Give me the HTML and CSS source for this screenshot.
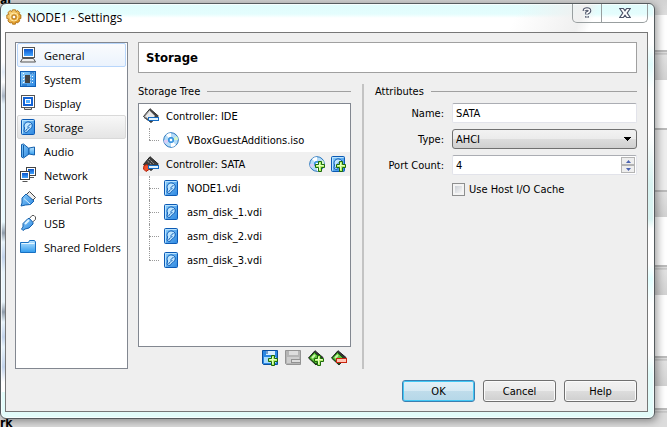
FILE: index.html
```html
<!DOCTYPE html>
<html lang="en">
<head>
  <meta charset="UTF-8">
  <meta name="viewport" content="width=device-width, initial-scale=1.0">
  <title>NODE1 - Settings</title>
  <link rel="stylesheet" href="styles.css">
</head>
<body>
  <!-- shared icons -->
  <svg class="sprite" aria-hidden="true">
    <defs>
      <linearGradient id="blue" x1="0" y1="0" x2="1" y2="1">
        <stop offset="0" stop-color="#8fd0fb"/>
        <stop offset="1" stop-color="#2b86e0"/>
      </linearGradient>
      <linearGradient id="screen" x1="0" y1="0" x2="0" y2="1">
        <stop offset="0" stop-color="#0a55cc"/>
        <stop offset="1" stop-color="#42a5ff"/>
      </linearGradient>
      <linearGradient id="folder" x1="0" y1="0" x2="0" y2="1">
        <stop offset="0" stop-color="#bfe6ff"/>
        <stop offset="1" stop-color="#2f9bee"/>
      </linearGradient>
      <linearGradient id="gold" x1="0" y1="0" x2="1" y2="1">
        <stop offset="0" stop-color="#ffe08a"/>
        <stop offset="1" stop-color="#d98a10"/>
      </linearGradient>
    </defs>
    <symbol id="disk" viewBox="0 0 16 16">
      <rect x="1.5" y=".5" width="13" height="15" rx="1" fill="url(#blue)" stroke="#0c5ab4"/>
      <path d="M2.5 14.5v-13h11" fill="none" stroke="#b9e3ff"/>
      <path d="M4.5 9C3 5 6 2.500 9 3c4 .8 4 5 1.500 7-1.500 1-2 1-2.500 2.500-1 1.500-3.500 1-4-.5z" fill="#bfe6ff" stroke="#0c5ab4"/>
      <path d="M10.500 5L8 7.500c-.5 1 .2 1.800 1.500 1.200M5.500 12l2-2.500" fill="none" stroke="#0c5ab4"/>
    </symbol>
    <symbol id="disc" viewBox="0 0 16 16">
      <circle cx="8" cy="8" r="7.3" fill="#b5dcf8" stroke="#2a76bd"/>
      <path d="M8 8L3 3a7 7 0 0 1 5-2z" fill="#fff"/>
      <path d="M8 8l5 5a7 7 0 0 1-5 2z" fill="#fff"/>
      <path d="M8 8l6-4a7 7 0 0 1 1 4z" fill="#d6f7c8"/>
      <path d="M8 8l-6 4a7 7 0 0 1-1-4z" fill="#d9cdf6"/>
      <circle cx="8" cy="8" r="2.700" fill="#4ba4ea" stroke="#3c92dc"/>
      <circle cx="8" cy="8" r="1.2" fill="#fff"/>
    </symbol>
    <symbol id="plus" viewBox="0 0 16 16">
      <path d="M9.500 5.500h3v3h3v3h-3v4h-3v-4h-3v-3h3z" fill="#b4f06e" stroke="#1d6b0a"/>
      <path d="M10.500 14V7M7.500 9.500h7" stroke="#e4ffc0" fill="none"/>
    </symbol>
    <symbol id="chip" viewBox="0 0 16 16">
      <path d="M7 .7l8 6.800-7 7.500L.5 8z" fill="#333" stroke="#222"/>
      <path d="M6.500 2.500l6 6L8 14 1.200 8z" fill="#62c43c" stroke="#185f0b"/>
      <path d="M4 8l3-3" stroke="#ccf5ad" stroke-width="2"/>
    </symbol>
    <symbol id="ide" viewBox="0 0 16 16">
      <path d="M7 .7l8.300 7.300L8 14.500.5 8.500z" fill="#444" stroke="#333"/>
      <path d="M6.500 2.500l5.500 5.500-4.500 4.500-6-4z" fill="#e7e7e7" stroke="#999"/>
      <path d="M1 9.500l6 4" stroke="#555"/>
      <rect x="5.500" y="9.500" width="10" height="3" fill="#dff3ff" stroke="#1469c0"/>
    </symbol>
    <symbol id="sata" viewBox="0 0 16 16">
      <path d="M7 .7l8.300 7.300L8 14.500.5 8.500z" fill="#3d3d3d" stroke="#222"/>
      <path d="M6 3l5 5M4.500 5l4.500 4" stroke="#a5a5a5" stroke-dasharray="2 1"/>
      <path d="M1 9.500l3-1 2 2v3l-3 2-2.500-2.500z" fill="#f2522b" stroke="#ae210b"/>
      <rect x="5.500" y="9.500" width="10" height="3" fill="#dff3ff" stroke="#1469c0"/>
    </symbol>
  </svg>

  <span class="behind behind-top">al</span>
  <span class="behind behind-bottom">rk</span>

  <div class="window">
    <header class="titlebar">
      <svg class="icon" viewBox="0 0 16 16">
        <path d="M6.500.8h3l.5 1.700 1.700-.9 2 2-.8 1.600 2 .7v3.600l-2 .7.800 1.700-2 2-1.700-.8-.6 2.100H6.500l-.7-2-1.700.8-2.200-2 .9-1.800-2-.7V6l2-.6-.9-1.800 2.200-2 1.700.9z" fill="url(#gold)" stroke="#a66305" stroke-width=".8"/>
        <circle cx="8" cy="8" r="4" fill="none" stroke="#ffe8a6"/>
        <circle cx="8" cy="8" r="2" fill="#fff" stroke="#b06c09"/>
      </svg>
      <h1 class="title">NODE1 - Settings</h1>
      <div class="caption-buttons">
        <button type="button" class="caption-button" aria-label="Help">
          <svg class="glyph" viewBox="0 0 12 12">
            <path d="M3.500 4V3.200Q3.700 2 6 2t2.500 1.700Q8.500 5 6 6v1.500M6 9v1.800" fill="none" stroke="#4c5368" stroke-width="3.600"/>
            <path d="M3.500 3.700V3.200Q3.700 2 6 2t2.500 1.700Q8.500 5 6 6v1.200M6 9.300v1.200" fill="none" stroke="#fff" stroke-width="1.500"/>
          </svg>
        </button>
        <button type="button" class="caption-button caption-close" aria-label="Close">
          <svg class="glyph" viewBox="0 0 12 12">
            <path d="M.7 1.500h3.600L6 3.700l1.700-2.200h3.600L8.200 6l3.100 4.500H7.700L6 8.300l-1.700 2.200H.7L3.800 6z" fill="#fff" stroke="#4c5368" stroke-width="1.200"/>
          </svg>
        </button>
      </div>
    </header>

    <form class="client">
      <div class="main">
        <nav class="sidebar">
          <a href="#general" class="nav-item hover">
            <svg class="icon" viewBox="0 0 16 16">
              <rect x="2.500" y=".5" width="12" height="10" fill="#fff" stroke="#555"/>
              <rect x="4" y="2" width="9" height="7" fill="url(#screen)"/>
              <path d="M2.500 11.500h11l2 3.500H.5z" fill="#eee" stroke="#555"/>
            </svg>
            General
          </a>
          <a href="#system" class="nav-item">
            <svg class="icon" viewBox="0 0 16 16">
              <rect x=".5" y=".5" width="15" height="15" fill="url(#blue)" stroke="#1060b8"/>
              <path d="M3.500 2v12M12.500 2v12" stroke="#fff" stroke-dasharray="1 2"/>
              <rect x="5" y="4" width="5" height="8" fill="#444"/>
              <path d="M4 5h7M4 8h7M4 11h7" stroke="#dceeff" stroke-dasharray="1 5"/>
              <path d="M2 14h5M10 2h4" stroke="#0d5bb3"/>
            </svg>
            System
          </a>
          <a href="#display" class="nav-item">
            <svg class="icon" viewBox="0 0 16 16">
              <rect x="1.500" y=".5" width="13" height="12" fill="#fff" stroke="#555"/>
              <rect x="3" y="2" width="10" height="9" fill="#1263d6"/>
              <rect x="5.500" y="4.500" width="5" height="4" fill="#55b0ff" stroke="#fff"/>
              <path d="M4.500 13v1.500h7V13" fill="#ddd" stroke="#555"/>
            </svg>
            Display
          </a>
          <a href="#storage" class="nav-item current">
            <svg class="icon"><use href="#disk"/></svg>
            Storage
          </a>
          <a href="#audio" class="nav-item">
            <svg class="icon" viewBox="0 0 16 16">
              <path d="M1.500 1.500l2-.5L9 5.500V11l-5.500 4-2-1z" fill="url(#blue)" stroke="#1460ad"/>
              <path d="M3.500 2v12" stroke="#1460ad"/>
              <path d="M9 5l5.500-1v8L9 11z" fill="url(#folder)" stroke="#1460ad"/>
            </svg>
            Audio
          </a>
          <a href="#network" class="nav-item">
            <svg class="icon" viewBox="0 0 16 16">
              <rect x="6.500" y=".5" width="9" height="8" fill="#fff" stroke="#444"/>
              <rect x="8" y="2" width="6" height="5" fill="url(#screen)"/>
              <path d="M10 10.500h4" stroke="#555"/>
              <rect x=".5" y="4.500" width="9" height="8" fill="#fff" stroke="#444"/>
              <rect x="2" y="6" width="6" height="5" fill="url(#screen)"/>
              <path d="M2.500 14.500h5" stroke="#555"/>
            </svg>
            Network
          </a>
          <a href="#serial" class="nav-item">
            <svg class="icon" viewBox="0 0 16 16">
              <path d="M6 4l3.500-3.500 6 6L12 10z" fill="#eee" stroke="#444"/>
              <path d="M2 7l4-4 8 7-3.500 3.500-5 .5L1 15l1-3z" fill="url(#blue)" stroke="#1460ad"/>
              <path d="M4 7.500l6 5.500" stroke="#d6efff"/>
            </svg>
            Serial Ports
          </a>
          <a href="#usb" class="nav-item">
            <svg class="icon" viewBox="0 0 16 16">
              <path d="M9 4l3-3.500h2L15.500 2v2.500L12 7.500z" fill="#fff" stroke="#555"/>
              <path d="M3 8.500l5-5h1.500l3.500 4V9l-4 4-4 1-2 1.500L1.500 14 3 12z" fill="url(#blue)" stroke="#1460ad"/>
              <path d="M5 9l4-4" stroke="#e2f5ff" stroke-width="2"/>
            </svg>
            USB
          </a>
          <a href="#shared" class="nav-item">
            <svg class="icon" viewBox="0 0 16 16">
              <path d="M.5 13.500v-10h8l1-2h5l1 1.500v10.500z" fill="url(#folder)" stroke="#1770c2"/>
              <path d="M1.500 4.500h13" stroke="#e6f7ff"/>
            </svg>
            Shared Folders
          </a>
        </nav>

        <div class="page">
          <h2 class="page-title">Storage</h2>
          <div class="panels">
            <section class="panel">
              <h3 class="group-title">Storage Tree</h3>
              <ul class="tree">
                <li class="tree-row">
                  <svg class="icon"><use href="#ide"/></svg>
                  <span>Controller: IDE</span>
                </li>
                <li class="tree-row child last">
                  <svg class="icon"><use href="#disc"/></svg>
                  <span>VBoxGuestAdditions.iso</span>
                </li>
                <li class="tree-row selected">
                  <svg class="icon"><use href="#sata"/></svg>
                  <span class="grow">Controller: SATA</span>
                  <button type="button" class="tool" aria-label="Add CD/DVD Device">
                    <svg class="icon"><use href="#disc"/><use href="#plus"/></svg>
                  </button>
                  <button type="button" class="tool" aria-label="Add Hard Disk">
                    <svg class="icon"><use href="#disk"/><use href="#plus"/></svg>
                  </button>
                </li>
                <li class="tree-row child">
                  <svg class="icon"><use href="#disk"/></svg>
                  <span>NODE1.vdi</span>
                </li>
                <li class="tree-row child">
                  <svg class="icon"><use href="#disk"/></svg>
                  <span>asm_disk_1.vdi</span>
                </li>
                <li class="tree-row child">
                  <svg class="icon"><use href="#disk"/></svg>
                  <span>asm_disk_2.vdi</span>
                </li>
                <li class="tree-row child last">
                  <svg class="icon"><use href="#disk"/></svg>
                  <span>asm_disk_3.vdi</span>
                </li>
              </ul>
              <div class="toolbar">
                <button type="button" class="tool" aria-label="Add Attachment">
                  <svg class="icon" viewBox="0 0 16 16">
                    <path d="M.5.5h15v14h-14l-1-1z" fill="#2c88e2" stroke="#0b4f9f"/>
                    <path d="M4 1h9v4H4z" fill="#d9efff"/>
                    <path d="M2 7h12v6H2z" fill="#a9dcff"/>
                    <path d="M5 1v3" stroke="#0b4f9f"/>
                    <use href="#plus"/>
                  </svg>
                </button>
                <button type="button" class="tool" aria-label="Remove Attachment" disabled>
                  <svg class="icon" viewBox="0 0 16 16">
                    <path d="M.5.5h15v14h-14l-1-1z" fill="#b5b5b5" stroke="#949494"/>
                    <path d="M4 1h9v4H4z" fill="#ddd"/>
                    <path d="M2 7h12v6H2z" fill="#cecece"/>
                    <rect x="6.500" y="9.500" width="9" height="3" fill="#ddd" stroke="#929292"/>
                  </svg>
                </button>
                <button type="button" class="tool" aria-label="Add Controller">
                  <svg class="icon"><use href="#chip"/><use href="#plus"/></svg>
                </button>
                <button type="button" class="tool" aria-label="Remove Controller">
                  <svg class="icon" viewBox="0 0 16 16">
                    <use href="#chip"/>
                    <rect x="5.500" y="8.500" width="10" height="4" fill="#ffc4b4" stroke="#c9230e"/>
                  </svg>
                </button>
              </div>
            </section>

            <div class="divider"></div>

            <section class="panel">
              <h3 class="group-title">Attributes</h3>
              <div class="fields">
                <label for="name">Name:</label>
                <input type="text" id="name" class="field" value="SATA">

                <label for="type">Type:</label>
                <select id="type" class="field combo">
                  <option>AHCI</option>
                </select>

                <label for="ports">Port Count:</label>
                <div class="spin field">
                  <input type="text" id="ports" class="spin-input" inputmode="numeric" value="4">
                  <div class="spin-buttons">
                    <button type="button" class="spin-button" aria-label="Increase">
                      <svg class="arrow" viewBox="0 0 5 3"><path d="M0 3l2.500-3L5 3z"/></svg>
                    </button>
                    <button type="button" class="spin-button" aria-label="Decrease">
                      <svg class="arrow" viewBox="0 0 5 3"><path d="M0 0l2.500 3L5 0z"/></svg>
                    </button>
                  </div>
                </div>

                <div class="check">
                  <input type="checkbox" id="cache" class="checkbox">
                  <label for="cache">Use Host I/O Cache</label>
                </div>
              </div>
            </section>
          </div>
        </div>
      </div>

      <footer class="actions">
        <button type="button" class="button default">OK</button>
        <button type="button" class="button">Cancel</button>
        <button type="button" class="button">Help</button>
      </footer>
    </form>
  </div>
</body>
</html>
```

FILE: styles.css
```css
* {
  box-sizing: border-box;
}

body {
  display: flex;
  height: 100vh;
  margin: 0;
  padding: 3px 12px 8px 0;
  overflow: hidden;
  font-family: "DejaVu Sans Condensed", "DejaVu Sans", sans-serif;
  font-size: 11px;
  color: #000;
  background: linear-gradient(
    #d2d2d2 0, #dedede 15px, #fff 15px, #fff 50px,
    #bbb 50px, #bbb 52px, #e8e8e8 52px, #bbb 54px, #e2e2e2 55px, #d2d2d2 80px, #fff 80px, #fff 128px,
    #bbb 128px, #bbb 130px, #eee 130px, #eee 190px,
    #bbb 190px, #bbb 192px, #e2e2e2 192px, #d2d2d2 217px, #fff 217px, #fff 265px,
    #bbb 265px, #bbb 267px, #e8e8e8 267px, #bbb 269px, #e2e2e2 270px, #d2d2d2 295px, #fff 295px, #fff 356px,
    #bbb 356px, #bbb 358px, #e8e8e8 358px, #bbb 360px, #e2e2e2 361px, #d2d2d2 386px, #fff 386px, #fff 408px,
    #bbb 408px, #bbb 410px, #e8e8e8 410px, #bbb 412px, #dcdcdc 413px);
}

h1, h2, h3, ul {
  margin: 0;
  padding: 0;
  font-size: 11px;
  font-weight: normal;
}

button, input, select {
  margin: 0;
  padding: 0;
  font: inherit;
  color: inherit;
}

.sprite {
  position: absolute;
  width: 0;
  height: 0;
}

.icon {
  display: block;
  flex: none;
  width: 16px;
  height: 16px;
}

/* text of the window underneath */
.behind {
  position: absolute;
  left: 0;
  font-weight: bold;
  font-size: 12px;
  line-height: 12px;
}

.behind-top {
  top: -6px;
}

.behind-bottom {
  bottom: -2px;
}

.window {
  position: relative;
  display: flex;
  flex: 1;
  flex-direction: column;
  min-width: 0;
  padding: 0 6px 6px 4px;
  border: 1px solid #555b5e;
  border-radius: 6px;
  background:
    linear-gradient(#fff 0, #fff 30px, #e3edf8 40px, #fff 50px, #a9b5c4 64px, #e8f4fb 72px, #eafaff 190px, #8f9cab 201px, #e8f4fb 210px, #c3d4ec 225px, #e8f4fb 240px, #e8f4fb 270px, #8f9cab 280px, #e8f4fb 290px, #c3d4ec 305px, #e8f4fb 315px, #c3d4ec 335px, #fff 350px) 0 28px / 4px 360px no-repeat,
    linear-gradient(115deg, rgba(240, 240, 240, 0) 48%, #f0f0f0 58%, rgba(240, 240, 240, 0) 60%) 200px 0 / 100% 28px no-repeat,
    linear-gradient(#e0fcfc, #e4fdfd 10px, #fff 14px, #fff 40px, #e0fbfb 60px, #fff 85px, #fff 130px, #d9f3f1 180px, #d9f3f1 215px, #fff 225px, #fff 260px, #e2ffff 275px, #fff 300px, #fff 350px, #e2fcfa 370px);
  box-shadow: inset 0 0 0 1px rgba(255, 255, 255, 0.7), 2px 2px 8px rgba(0, 0, 0, 0.4);
}

.titlebar {
  display: flex;
  align-items: flex-start;
  gap: 5px;
  height: 28px;
}

.titlebar > .icon {
  margin: 5px 0 0 1px;
}

.title {
  flex: 1;
  font-family: "Open Sans", "Noto Sans", sans-serif;
  font-size: 12px;
  line-height: 28px;
}

.caption-buttons {
  display: flex;
  height: 19px;
  border: 1px solid #999fa0;
  border-top: 0;
  border-radius: 0 0 5px 5px;
}

.caption-button {
  display: flex;
  align-items: center;
  justify-content: center;
  width: 28px;
  border: 0;
  background: none;
}

.caption-close {
  width: 46px;
  border-left: 1px solid #999fa0;
}

.glyph {
  width: 12px;
  height: 12px;
}

.client {
  display: flex;
  flex: 1;
  flex-direction: column;
  gap: 11px;
  min-height: 0;
  padding: 9px 10px 9px 9px;
  border: 1px solid #777;
  background: #efefef;
}

.main {
  display: flex;
  flex: 1;
  gap: 10px;
  min-height: 0;
}

.sidebar {
  width: 113px;
  padding: 0 1px;
  border: 1px solid #828790;
  background: #fff;
  font-family: "Open Sans", "Noto Sans", sans-serif;
}

.nav-item {
  display: flex;
  align-items: center;
  gap: 8px;
  height: 24px;
  padding: 0 2px;
  border: 1px solid transparent;
  border-radius: 2px;
  color: #000;
  text-decoration: none;
  white-space: nowrap;
}

.nav-item.hover {
  border-color: #b8d6fb;
  background: linear-gradient(#fafbfd, #ebf3fd);
}

.nav-item.current {
  border-color: #d9d9d9;
  background: linear-gradient(#f8f8f8, #e5e5e5);
}

.page {
  display: flex;
  flex: 1;
  flex-direction: column;
  gap: 11px;
  min-width: 0;
}

.page-title {
  padding: 0 7px;
  border: 1px solid #a0a0a0;
  background: #fff;
  font-family: "DejaVu Sans Condensed", "DejaVu Sans", sans-serif;
  font-size: 13px;
  font-weight: bold;
  line-height: 29px;
}

.panels {
  display: grid;
  flex: 1;
  grid-template-columns: 213fr 2px 262fr;
  column-gap: 11px;
}

.panel {
  display: flex;
  flex-direction: column;
  min-width: 0;
}

.divider {
  background: #c3c3c3;
}

.group-title {
  display: flex;
  align-items: center;
  gap: 7px;
  height: 19px;
  padding-bottom: 4px;
}

.group-title::after {
  content: "";
  flex: 1;
  height: 1px;
  background: #a0a0a0;
}

.tree {
  flex: 1;
  border: 1px solid #828790;
  background: #fff;
  list-style: none;
}

.tree-row {
  display: flex;
  align-items: center;
  gap: 7px;
  height: 24px;
  padding: 0 4px;
  white-space: nowrap;
}

.tree-row.selected {
  gap: 5px;
  background: #f0f0f0;
}

.tree-row.selected .grow {
  flex: 1;
  padding-left: 2px;
}

/* dotted branch lines */
.tree-row.child {
  position: relative;
  gap: 8px;
  padding-left: 24px;
}

.tree-row.child::before,
.tree-row.child::after {
  content: "";
  position: absolute;
  left: 10px;
}

.tree-row.child::before {
  top: 0;
  bottom: 0;
  border-left: 1px dotted #999;
}

.tree-row.child.last::before {
  bottom: 12px;
}

.tree-row.child::after {
  top: 12px;
  width: 10px;
  border-top: 1px dotted #999;
}

.tool {
  border: 0;
  background: none;
}

.toolbar {
  display: flex;
  justify-content: flex-end;
  gap: 7px;
  padding: 3px 4px;
}

.fields {
  display: grid;
  grid-template-columns: 69px 1fr;
  gap: 6px 8px;
  align-items: center;
}

.fields > label {
  text-align: right;
  white-space: nowrap;
}

.field {
  width: 100%;
  min-width: 0;
  height: 20px;
  padding: 0 3px;
  border: 1px solid #e2e3ea;
  border-top-color: #abadb3;
  border-radius: 2px;
  background: #fff;
}

.combo {
  appearance: none;
  border-color: #707070;
  border-radius: 3px;
  background:
    linear-gradient(#000, #000) right 5px top 7px / 7px 1px no-repeat,
    linear-gradient(#000, #000) right 6px top 8px / 5px 1px no-repeat,
    linear-gradient(#000, #000) right 7px top 9px / 3px 1px no-repeat,
    linear-gradient(#000, #000) right 8px top 10px / 1px 1px no-repeat,
    linear-gradient(#f2f2f2, #ebebeb 50%, #ddd 50%, #cfcfcf);
}

.spin {
  display: flex;
  padding: 1px 1px 1px 3px;
}

.spin-input {
  flex: 1;
  min-width: 0;
  border: 0;
  background: none;
}

.spin-buttons {
  display: flex;
  flex-direction: column;
  width: 14px;
}

.spin-button {
  display: flex;
  flex: 1;
  align-items: center;
  justify-content: center;
  border: 1px solid #b4b4b4;
  background: #eee;
}

.arrow {
  width: 5px;
  height: 3px;
  fill: #4a62b0;
}

.check {
  display: flex;
  grid-column: 2;
  align-items: center;
  gap: 4px;
  height: 17px;
}

.checkbox {
  appearance: none;
  width: 13px;
  height: 13px;
  border: 1px solid #8e8f8f;
  background: linear-gradient(135deg, #cbcfd5, #f6f6f6) 2px 2px / 7px 7px no-repeat #f4f4f4;
}

.actions {
  display: flex;
  justify-content: flex-end;
  gap: 8px;
}

.button {
  width: 73px;
  height: 22px;
  border: 1px solid #707070;
  border-radius: 3px;
  background: linear-gradient(#f2f2f2, #ebebeb 50%, #ddd 50%, #cfcfcf);
  box-shadow: inset 0 0 0 1px #fbfbfb;
}

.button.default {
  border-color: #3c7fb1;
  background: linear-gradient(#e3f1f8, #d5e9f3 50%, #bfdceb 50%, #b5d7e8);
  box-shadow: inset 0 0 0 1px #42c8f5;
}
```
